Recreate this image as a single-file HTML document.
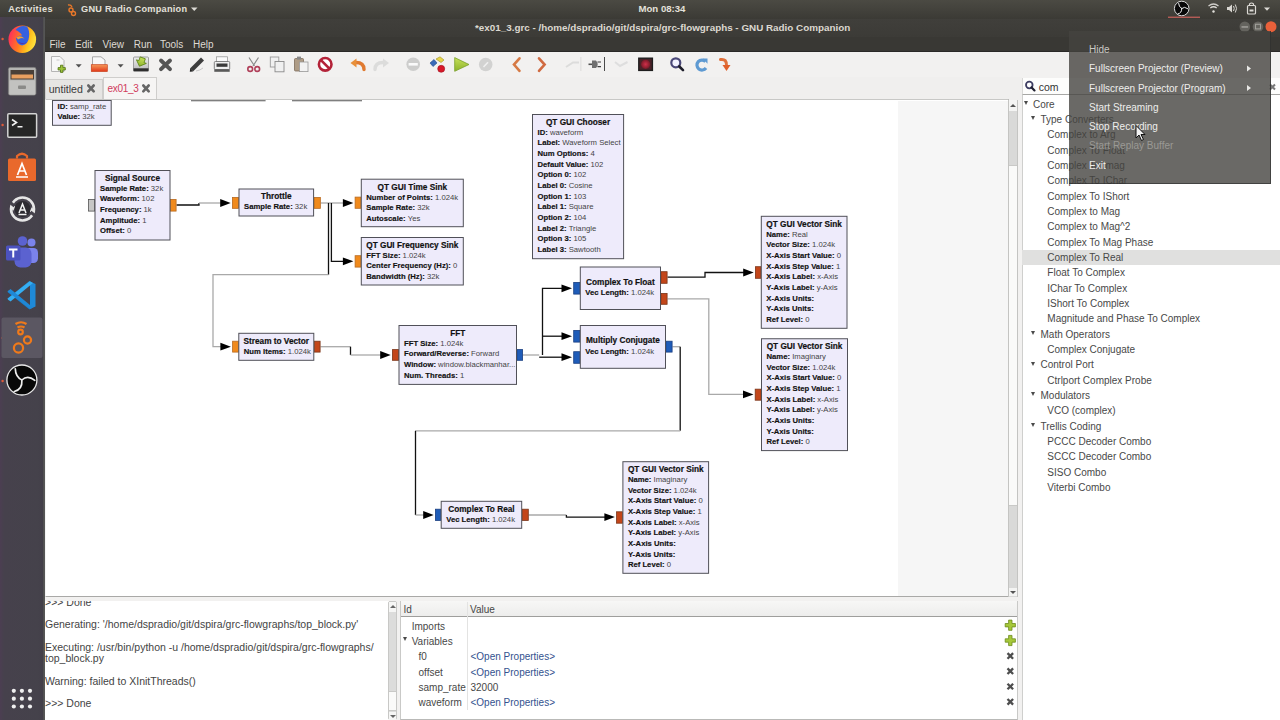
<!DOCTYPE html>
<html><head><meta charset="utf-8">
<style>
*{box-sizing:border-box}
html,body{margin:0;padding:0}
body{width:1280px;height:720px;position:relative;overflow:hidden;background:#f2f1f0;font-family:"Liberation Sans",sans-serif;}
.a{position:absolute}
.t{position:absolute;white-space:nowrap;line-height:1}
.bt{font-family:"Liberation Sans",sans-serif;font-size:8.25px;font-weight:700;fill:#111;stroke:#111;stroke-width:0.18}
.br{font-family:"Liberation Sans",sans-serif;font-size:7.7px;fill:#444}
.bk{font-weight:bold;fill:#111;stroke:#111;stroke-width:0.15}
#topbar{left:0;top:0;width:1280px;height:19px;background:linear-gradient(#4b4a43,#3b3a35)}
#titlebar{left:45px;top:19px;width:1235px;height:18px;background:linear-gradient(#403f3b,#3c3b37)}
#menubar{left:45px;top:37px;width:1235px;height:15px;background:#393834;border-bottom:1px solid #2a2927}
#dock{left:0;top:17px;width:45px;height:703px;background:linear-gradient(to right,#4c3e52 0px,#46414c 4px,#45424b 38px,#433f49 42.5px,#505050 43.5px,#585858 45px)}
#toolbar{left:45px;top:52px;width:1235px;height:26px;background:#f2f1f0}
#tabs{left:45px;top:77px;width:977px;height:23px;background:#f0efee}
#canvas{left:45px;top:99px;width:964px;height:498px;background:#ffffff;border:1px solid #a9a9a7;border-left-color:#f4f4f4;border-top-color:#c8c8c6}
#cgrey{left:898px;top:101px;width:110px;height:495px;background:#f6f6f6}
#vscroll{left:1008px;top:100px;width:10px;height:497px;background:#d9d9d8;border-left:1px solid #c4c4c2;border-right:1px solid #c4c4c2}
#tree{left:1022px;top:95px;width:258px;height:625px;background:#ffffff;border-left:1px solid #cfcfcd}
#search{left:1022px;top:78px;width:258px;height:17px;background:#fdfdfc;border-bottom:1px solid #a7a7a5;border-left:1px solid #d8d8d6}
.tb{color:#e4e1da;font-size:10px;font-weight:bold}
.mn{color:#dedad3;font-size:10px}
.tr{position:absolute;white-space:nowrap;line-height:1;font-size:10px;color:#484848}
.tri{position:absolute;width:0;height:0;border-left:3px solid transparent;border-right:3px solid transparent;border-top:5px solid #4a4a4a}
#console{left:45px;top:601px;width:344px;height:119px;background:#ffffff}
.cs{position:absolute;white-space:nowrap;line-height:1;font-size:10.5px;color:#444;left:45px}
#cscroll{left:388px;top:601px;width:9px;height:119px;background:#dcdcdb;border:1px solid #c8c8c6;border-radius:2px}
#vars{left:400px;top:601px;width:618px;height:119px;background:#ffffff;border-left:1px solid #c9c9c7;border-right:1px solid #c9c9c7;border-bottom:1px solid #b9b9b7}
#vhead{left:401px;top:601px;width:616px;height:16px;background:linear-gradient(#f7f7f6,#ededec);border-bottom:1px solid #9e9e9c}
.vt{position:absolute;white-space:nowrap;line-height:1;font-size:10px;color:#474747}
.lk{color:#33528e}
#obs{left:1069px;top:31px;width:202px;height:153px;background:rgba(69,68,64,0.8);border-right:1px solid rgba(40,40,40,0.6);border-bottom:1px solid rgba(40,40,40,0.6)}
.om{position:absolute;white-space:nowrap;line-height:1;font-size:10px;color:#eeeeec;left:20px}
</style></head>
<body>
<div id="topbar" class="a"></div>
<div class="t tb" style="left:8.2px;top:5.4px;font-size:9.2px;letter-spacing:0.4px">Activities</div>
<div class="t tb" style="left:81px;top:5px;font-size:9.2px;letter-spacing:0.25px">GNU Radio Companion</div>
<div class="t tb" style="left:638.5px;top:4px;font-size:9.6px">Mon 08:34</div>
<div id="titlebar" class="a"></div>
<div class="t tb" style="left:475px;top:23px;font-size:9.85px;color:#dcd8d0">*ex01_3.grc - /home/dspradio/git/dspira/grc-flowgraphs - GNU Radio Companion</div>
<div id="menubar" class="a"></div>
<div class="t mn" style="left:49.4px;top:40px">File</div>
<div class="t mn" style="left:75px;top:40px">Edit</div>
<div class="t mn" style="left:102.5px;top:40px">View</div>
<div class="t mn" style="left:133.7px;top:40px">Run</div>
<div class="t mn" style="left:160px;top:40px">Tools</div>
<div class="t mn" style="left:193px;top:40px">Help</div>
<div id="toolbar" class="a"></div>
<div id="tabs" class="a"></div>
<div class="a" style="left:45px;top:79px;width:58px;height:21px;background:#e6e5e3;border:1px solid #cfcecc;border-bottom:none"></div>
<div class="a" style="left:103px;top:77px;width:54px;height:23px;background:#f6f5f4;border:1px solid #cfcecc;border-bottom:none"></div>
<div class="tr" style="left:48.7px;top:83.6px;color:#3a3a3a;font-size:10.6px">untitled</div>
<div class="tr" style="left:107.5px;top:83.8px;color:#d03a5c;font-size:10px;letter-spacing:-0.3px">ex01_3</div>
<div id="canvas" class="a"></div>
<div id="cgrey" class="a"></div>
<div id="vscroll" class="a"></div>
<div class="a" style="left:1009px;top:165px;width:8px;height:341px;background:#fafaf9;border-top:1px solid #c9c9c7;border-bottom:1px solid #c9c9c7"></div>
<div class="a" style="left:1009px;top:100px;width:8px;height:11px;background:#f4f4f3"></div>
<div class="a" style="left:1009px;top:588px;width:8px;height:8px;background:#f4f4f3"></div>
<div class="tri" style="left:1010px;top:104px;border-top:none;border-bottom:3px solid #555"></div>
<div class="tri" style="left:1010px;top:591px;border-top:3px solid #555"></div>
<div id="search" class="a"></div>
<div class="tr" style="left:1038.7px;top:82px;font-size:10.5px;color:#333">com</div>
<div id="tree" class="a"></div>
<div class="a" style="left:1022px;top:249.5px;width:258px;height:15px;background:#e0e0df"></div>
<div class="tr" style="left:1033px;top:99.7px">Core</div>
<div class="tri" style="left:1023.7px;top:100.9px;border-left-width:2.5px;border-right-width:2.5px;border-top-width:4.5px"></div>
<div class="tr" style="left:1040.5px;top:115.03px">Type Converters</div>
<div class="tri" style="left:1031.2px;top:116.23px;border-left-width:2.5px;border-right-width:2.5px;border-top-width:4.5px"></div>
<div class="tr" style="left:1047.3px;top:130.36px">Complex to Arg</div>
<div class="tr" style="left:1047.3px;top:145.69px">Complex To Float</div>
<div class="tr" style="left:1047.3px;top:161.02px">Complex To Imag</div>
<div class="tr" style="left:1047.3px;top:176.35px">Complex To IChar</div>
<div class="tr" style="left:1047.3px;top:191.68px">Complex To IShort</div>
<div class="tr" style="left:1047.3px;top:207.01px">Complex to Mag</div>
<div class="tr" style="left:1047.3px;top:222.34px">Complex to Mag^2</div>
<div class="tr" style="left:1047.3px;top:237.67px">Complex To Mag Phase</div>
<div class="tr" style="left:1047.3px;top:253px">Complex To Real</div>
<div class="tr" style="left:1047.3px;top:268.33px">Float To Complex</div>
<div class="tr" style="left:1047.3px;top:283.66px">IChar To Complex</div>
<div class="tr" style="left:1047.3px;top:298.99px">IShort To Complex</div>
<div class="tr" style="left:1047.3px;top:314.32px">Magnitude and Phase To Complex</div>
<div class="tr" style="left:1040.5px;top:329.65px">Math Operators</div>
<div class="tri" style="left:1031.2px;top:330.85px;border-left-width:2.5px;border-right-width:2.5px;border-top-width:4.5px"></div>
<div class="tr" style="left:1047.3px;top:344.98px">Complex Conjugate</div>
<div class="tr" style="left:1040.5px;top:360.31px">Control Port</div>
<div class="tri" style="left:1031.2px;top:361.51px;border-left-width:2.5px;border-right-width:2.5px;border-top-width:4.5px"></div>
<div class="tr" style="left:1047.3px;top:375.64px">Ctrlport Complex Probe</div>
<div class="tr" style="left:1040.5px;top:390.97px">Modulators</div>
<div class="tri" style="left:1031.2px;top:392.17px;border-left-width:2.5px;border-right-width:2.5px;border-top-width:4.5px"></div>
<div class="tr" style="left:1047.3px;top:406.3px">VCO (complex)</div>
<div class="tr" style="left:1040.5px;top:421.63px">Trellis Coding</div>
<div class="tri" style="left:1031.2px;top:422.83px;border-left-width:2.5px;border-right-width:2.5px;border-top-width:4.5px"></div>
<div class="tr" style="left:1047.3px;top:436.96px">PCCC Decoder Combo</div>
<div class="tr" style="left:1047.3px;top:452.29px">SCCC Decoder Combo</div>
<div class="tr" style="left:1047.3px;top:467.62px">SISO Combo</div>
<div class="tr" style="left:1047.3px;top:482.95px">Viterbi Combo</div>
<div id="console" class="a"></div>
<div class="cs" style="top:596.5px">&gt;&gt;&gt; Done</div>
<div class="cs" style="top:618.5px">Generating: '/home/dspradio/git/dspira/grc-flowgraphs/top_block.py'</div>
<div class="cs" style="top:641.5px">Executing: /usr/bin/python -u /home/dspradio/git/dspira/grc-flowgraphs/</div>
<div class="cs" style="top:652.5px">top_block.py</div>
<div class="cs" style="top:676px">Warning: failed to XInitThreads()</div>
<div class="cs" style="top:698px">&gt;&gt;&gt; Done</div>
<div class="a" style="left:45px;top:597px;width:344px;height:4px;background:#f2f1f0"></div>
<div id="cscroll" class="a"></div>
<div class="a" style="left:389px;top:602px;width:7px;height:10px;background:#f6f6f5"></div>
<div class="a" style="left:389px;top:691px;width:7px;height:20px;background:#fafaf9;border-top:1px solid #c9c9c7;border-bottom:1px solid #c9c9c7"></div>
<div class="a" style="left:389px;top:712px;width:7px;height:8px;background:#f6f6f5"></div>
<div class="tri" style="left:389.5px;top:605px;border-top:none;border-bottom:3px solid #666"></div>
<div class="tri" style="left:389.5px;top:715px;border-top:3px solid #666"></div>
<div id="vars" class="a"></div>
<div id="vhead" class="a"></div>
<div class="a" style="left:467px;top:602px;width:1px;height:108px;background:#e3e3e2"></div>
<div class="vt" style="left:403.5px;top:604.5px">Id</div>
<div class="vt" style="left:470px;top:604.5px">Value</div>
<div class="vt" style="left:411.7px;top:621.7px">Imports</div>
<div class="vt" style="left:411.7px;top:637px">Variables</div>
<div class="vt" style="left:418.5px;top:652.3px">f0</div>
<div class="vt" style="left:470.5px;top:652.3px"><span class="lk">&lt;Open Properties&gt;</span></div>
<div class="vt" style="left:418.5px;top:667.6px">offset</div>
<div class="vt" style="left:470.5px;top:667.6px"><span class="lk">&lt;Open Properties&gt;</span></div>
<div class="vt" style="left:418.5px;top:682.9px">samp_rate</div>
<div class="vt" style="left:470.5px;top:682.9px">32000</div>
<div class="vt" style="left:418.5px;top:698.2px">waveform</div>
<div class="vt" style="left:470.5px;top:698.2px"><span class="lk">&lt;Open Properties&gt;</span></div>
<div class="tri" style="left:402.5px;top:637px;border-left-width:2.5px;border-right-width:2.5px;border-top-width:4.5px"></div>
<svg class="a" style="left:1000px;top:615px" width="20" height="100" viewBox="1000 615 20 100">
<path d="M1008.6 620.1 h3.4 v3.4 h3.4 v3.4 h-3.4 v3.4 h-3.4 v-3.4 h-3.4 v-3.4 h3.4 z" fill="#a6c83a" stroke="#6c8a1c" stroke-width="0.8"/>
<path d="M1008.6 635.4 h3.4 v3.4 h3.4 v3.4 h-3.4 v3.4 h-3.4 v-3.4 h-3.4 v-3.4 h3.4 z" fill="#a6c83a" stroke="#6c8a1c" stroke-width="0.8"/>
<path d="M1007.5 653.1 L1013.1 658.7 M1013.1 653.1 L1007.5 658.7" stroke="#4e4e4e" stroke-width="2.3"/>
<path d="M1007.5 668.4 L1013.1 674 M1013.1 668.4 L1007.5 674" stroke="#4e4e4e" stroke-width="2.3"/>
<path d="M1007.5 683.7 L1013.1 689.3 M1013.1 683.7 L1007.5 689.3" stroke="#4e4e4e" stroke-width="2.3"/>
<path d="M1007.5 699 L1013.1 704.6 M1013.1 699 L1007.5 704.6" stroke="#4e4e4e" stroke-width="2.3"/>
</svg>
<svg class="a" style="left:0;top:0" width="1280" height="720" viewBox="0 0 1280 720">
<defs><clipPath id="cv"><rect x="46" y="100" width="961" height="496"/></clipPath></defs>
<g clip-path="url(#cv)">
<path d="M191 100.8 H265.6 M292 100.8 H362" stroke="#555" stroke-width="1.1"/>
<path d="M176.5 205 L199 205 L199 203" fill="none" stroke="#111111" stroke-width="1.3"/>
<path d="M199 203 L221 203" fill="none" stroke="#a9a9a9" stroke-width="1.3"/>
<path d="M320.75 203 L344 203" fill="none" stroke="#a9a9a9" stroke-width="1.3"/>
<path d="M331.4 203 L331.4 261.3 L344 261.3" fill="none" stroke="#111111" stroke-width="1.3"/>
<path d="M328.5 203 L328.5 274.7" fill="none" stroke="#111111" stroke-width="1.3"/>
<path d="M328.5 274.7 L213 274.7 L213 346.7 L221 346.7" fill="none" stroke="#a9a9a9" stroke-width="1.3"/>
<path d="M320.5 346.7 L350.5 346.7" fill="none" stroke="#a9a9a9" stroke-width="1.3"/>
<path d="M350.5 346.7 L350.5 355" fill="none" stroke="#111111" stroke-width="1.3"/>
<path d="M350.5 355 L381 355" fill="none" stroke="#a9a9a9" stroke-width="1.3"/>
<path d="M523 355 L539.2 355" fill="none" stroke="#a9a9a9" stroke-width="1.3"/>
<path d="M542.5 355 L542.5 288.3 L562 288.3" fill="none" stroke="#111111" stroke-width="1.3"/>
<path d="M542.5 336.2 L562 336.2" fill="none" stroke="#111111" stroke-width="1.3"/>
<path d="M539.2 357.2 L562 357.2" fill="none" stroke="#111111" stroke-width="1.3"/>
<path d="M667.5 277.2 L705 277.2 L705 272.5 L744 272.5" fill="none" stroke="#111111" stroke-width="1.3"/>
<path d="M667.5 298.8 L708.8 298.8 L708.8 394.4 L744 394.4" fill="none" stroke="#a9a9a9" stroke-width="1.3"/>
<path d="M672.5 346.7 L680.2 346.7" fill="none" stroke="#a9a9a9" stroke-width="1.3"/>
<path d="M680.2 346.7 L680.2 430.8" fill="none" stroke="#111111" stroke-width="1.3"/>
<path d="M680.2 430.8 L415.5 430.8" fill="none" stroke="#a9a9a9" stroke-width="1.3"/>
<path d="M415.5 430.8 L415.5 515" fill="none" stroke="#111111" stroke-width="1.3"/>
<path d="M415.5 515 L424 515" fill="none" stroke="#a9a9a9" stroke-width="1.3"/>
<path d="M528.7 515 L566.4 515" fill="none" stroke="#a9a9a9" stroke-width="1.3"/>
<path d="M566.4 515 L566.4 517.1 L605 517.1" fill="none" stroke="#111111" stroke-width="1.3"/>
<path d="M230.7 203 L220.2 199.1 L220.2 206.9 Z" fill="#000"/>
<path d="M353.4 203 L342.9 199.1 L342.9 206.9 Z" fill="#000"/>
<path d="M353.4 261.3 L342.9 257.4 L342.9 265.2 Z" fill="#000"/>
<path d="M230.9 346.7 L220.4 342.8 L220.4 350.6 Z" fill="#000"/>
<path d="M390.7 355 L380.2 351.1 L380.2 358.9 Z" fill="#000"/>
<path d="M572 288.3 L561.5 284.4 L561.5 292.2 Z" fill="#000"/>
<path d="M572 336.2 L561.5 332.3 L561.5 340.1 Z" fill="#000"/>
<path d="M572 357.2 L561.5 353.3 L561.5 361.1 Z" fill="#000"/>
<path d="M753.7 272.5 L743.2 268.6 L743.2 276.4 Z" fill="#000"/>
<path d="M753.5 394.4 L743 390.5 L743 398.3 Z" fill="#000"/>
<path d="M433.7 515 L423.2 511.1 L423.2 518.9 Z" fill="#000"/>
<path d="M614.9 517.1 L604.4 513.2 L604.4 521 Z" fill="#000"/>
<rect x="88.4" y="199.4" width="6.2" height="11.7" fill="#c6c6c6" stroke="#555" stroke-width="0.8"/>
<rect x="170.4" y="199.4" width="5.7" height="11.7" fill="#f08a1c" stroke="#b86a20" stroke-width="0.8"/>
<rect x="232.4" y="197.4" width="6.2" height="10.95" fill="#f08a1c" stroke="#b86a20" stroke-width="0.8"/>
<rect x="314" y="197.4" width="6.35" height="10.95" fill="#f08a1c" stroke="#b86a20" stroke-width="0.8"/>
<rect x="355.1" y="197.1" width="5.8" height="11.2" fill="#f08a1c" stroke="#b86a20" stroke-width="0.8"/>
<rect x="355.1" y="255.7" width="5.8" height="11.4" fill="#f08a1c" stroke="#b86a20" stroke-width="0.8"/>
<rect x="232.6" y="341.2" width="5.8" height="10.9" fill="#f08a1c" stroke="#b86a20" stroke-width="0.8"/>
<rect x="314.2" y="341.2" width="5.9" height="10.9" fill="#c3461a" stroke="#7a3418" stroke-width="0.8"/>
<rect x="392.4" y="349.6" width="6.2" height="10.7" fill="#c3461a" stroke="#7a3418" stroke-width="0.8"/>
<rect x="516.9" y="349.6" width="5.7" height="10.7" fill="#1f5cb8" stroke="#1a3f80" stroke-width="0.8"/>
<rect x="573.7" y="282.4" width="6.2" height="11.7" fill="#1f5cb8" stroke="#1a3f80" stroke-width="0.8"/>
<rect x="660.9" y="271.7" width="6.2" height="11.6" fill="#c3461a" stroke="#7a3418" stroke-width="0.8"/>
<rect x="660.9" y="293.4" width="6.2" height="10.9" fill="#c3461a" stroke="#7a3418" stroke-width="0.8"/>
<rect x="573.7" y="330.4" width="6.2" height="11.7" fill="#1f5cb8" stroke="#1a3f80" stroke-width="0.8"/>
<rect x="573.7" y="351.7" width="6.2" height="11.6" fill="#1f5cb8" stroke="#1a3f80" stroke-width="0.8"/>
<rect x="665.9" y="341.2" width="6.2" height="10.9" fill="#1f5cb8" stroke="#1a3f80" stroke-width="0.8"/>
<rect x="755.4" y="266.7" width="5.5" height="11.6" fill="#c3461a" stroke="#7a3418" stroke-width="0.8"/>
<rect x="755.2" y="389.15" width="5.9" height="11.05" fill="#c3461a" stroke="#7a3418" stroke-width="0.8"/>
<rect x="435.4" y="509.2" width="5.4" height="11.2" fill="#1f5cb8" stroke="#1a3f80" stroke-width="0.8"/>
<rect x="522.1" y="509.2" width="6.2" height="11.2" fill="#c3461a" stroke="#7a3418" stroke-width="0.8"/>
<rect x="616.6" y="511.8" width="5.9" height="11.4" fill="#c3461a" stroke="#7a3418" stroke-width="0.8"/>
<rect x="52.5" y="100.5" width="58.7" height="24.8" fill="#eeebfb" stroke="#505058" stroke-width="1"/>
<text x="81.85" y="-50" text-anchor="middle" class="bt"></text>
<text x="57.5" y="108.8" class="br"><tspan class="bk">ID: </tspan>samp_rate</text>
<text x="57.5" y="119.45" class="br"><tspan class="bk">Value: </tspan>32k</text>
<rect x="95" y="170.5" width="75" height="69.5" fill="#eeebfb" stroke="#505058" stroke-width="1"/>
<text x="132.5" y="180.9" text-anchor="middle" class="bt">Signal Source</text>
<text x="100" y="190.8" class="br"><tspan class="bk">Sample Rate: </tspan>32k</text>
<text x="100" y="201.45" class="br"><tspan class="bk">Waveform: </tspan>102</text>
<text x="100" y="212.1" class="br"><tspan class="bk">Frequency: </tspan>1k</text>
<text x="100" y="222.75" class="br"><tspan class="bk">Amplitude: </tspan>1</text>
<text x="100" y="233.4" class="br"><tspan class="bk">Offset: </tspan>0</text>
<rect x="239" y="189" width="74.6" height="27" fill="#eeebfb" stroke="#505058" stroke-width="1"/>
<text x="276.3" y="199.4" text-anchor="middle" class="bt">Throttle</text>
<text x="244" y="209.3" class="br"><tspan class="bk">Sample Rate: </tspan>32k</text>
<rect x="361.3" y="179.2" width="102" height="47.5" fill="#eeebfb" stroke="#505058" stroke-width="1"/>
<text x="412.3" y="189.6" text-anchor="middle" class="bt">QT GUI Time Sink</text>
<text x="366.3" y="199.5" class="br"><tspan class="bk">Number of Points: </tspan>1.024k</text>
<text x="366.3" y="210.15" class="br"><tspan class="bk">Sample Rate: </tspan>32k</text>
<text x="366.3" y="220.8" class="br"><tspan class="bk">Autoscale: </tspan>Yes</text>
<rect x="361.3" y="237.5" width="102" height="47.5" fill="#eeebfb" stroke="#505058" stroke-width="1"/>
<text x="412.3" y="247.9" text-anchor="middle" class="bt">QT GUI Frequency Sink</text>
<text x="366.3" y="257.8" class="br"><tspan class="bk">FFT Size: </tspan>1.024k</text>
<text x="366.3" y="268.45" class="br"><tspan class="bk">Center Frequency (Hz): </tspan>0</text>
<text x="366.3" y="279.1" class="br"><tspan class="bk">Bandwidth (Hz): </tspan>32k</text>
<rect x="238.8" y="333.3" width="75" height="27" fill="#eeebfb" stroke="#505058" stroke-width="1"/>
<text x="276.3" y="343.7" text-anchor="middle" class="bt">Stream to Vector</text>
<text x="243.8" y="353.6" class="br"><tspan class="bk">Num Items: </tspan>1.024k</text>
<rect x="399" y="325.5" width="117.5" height="58.9" fill="#eeebfb" stroke="#505058" stroke-width="1"/>
<text x="457.75" y="335.9" text-anchor="middle" class="bt">FFT</text>
<text x="404" y="345.8" class="br"><tspan class="bk">FFT Size: </tspan>1.024k</text>
<text x="404" y="356.45" class="br"><tspan class="bk">Forward/Reverse: </tspan>Forward</text>
<text x="404" y="367.1" class="br"><tspan class="bk">Window: </tspan>window.blackmanhar...</text>
<text x="404" y="377.75" class="br"><tspan class="bk">Num. Threads: </tspan>1</text>
<rect x="532.5" y="114.5" width="91.1" height="144.2" fill="#eeebfb" stroke="#505058" stroke-width="1"/>
<text x="578.05" y="124.9" text-anchor="middle" class="bt">QT GUI Chooser</text>
<text x="537.5" y="134.8" class="br"><tspan class="bk">ID: </tspan>waveform</text>
<text x="537.5" y="145.45" class="br"><tspan class="bk">Label: </tspan>Waveform Select</text>
<text x="537.5" y="156.1" class="br"><tspan class="bk">Num Options: </tspan>4</text>
<text x="537.5" y="166.75" class="br"><tspan class="bk">Default Value: </tspan>102</text>
<text x="537.5" y="177.4" class="br"><tspan class="bk">Option 0: </tspan>102</text>
<text x="537.5" y="188.05" class="br"><tspan class="bk">Label 0: </tspan>Cosine</text>
<text x="537.5" y="198.7" class="br"><tspan class="bk">Option 1: </tspan>103</text>
<text x="537.5" y="209.35" class="br"><tspan class="bk">Label 1: </tspan>Square</text>
<text x="537.5" y="220" class="br"><tspan class="bk">Option 2: </tspan>104</text>
<text x="537.5" y="230.65" class="br"><tspan class="bk">Label 2: </tspan>Triangle</text>
<text x="537.5" y="241.3" class="br"><tspan class="bk">Option 3: </tspan>105</text>
<text x="537.5" y="251.95" class="br"><tspan class="bk">Label 3: </tspan>Sawtooth</text>
<rect x="580.3" y="267" width="80.2" height="42.5" fill="#eeebfb" stroke="#505058" stroke-width="1"/>
<text x="620.4" y="284.625" text-anchor="middle" class="bt">Complex To Float</text>
<text x="585.3" y="295.025" class="br"><tspan class="bk">Vec Length: </tspan>1.024k</text>
<rect x="580.3" y="325.5" width="85.2" height="42.8" fill="#eeebfb" stroke="#505058" stroke-width="1"/>
<text x="622.9" y="343.275" text-anchor="middle" class="bt">Multiply Conjugate</text>
<text x="585.3" y="353.675" class="br"><tspan class="bk">Vec Length: </tspan>1.024k</text>
<rect x="761.3" y="216.3" width="85.7" height="112" fill="#eeebfb" stroke="#505058" stroke-width="1"/>
<text x="804.15" y="226.7" text-anchor="middle" class="bt">QT GUI Vector Sink</text>
<text x="766.3" y="236.6" class="br"><tspan class="bk">Name: </tspan>Real</text>
<text x="766.3" y="247.25" class="br"><tspan class="bk">Vector Size: </tspan>1.024k</text>
<text x="766.3" y="257.9" class="br"><tspan class="bk">X-Axis Start Value: </tspan>0</text>
<text x="766.3" y="268.55" class="br"><tspan class="bk">X-Axis Step Value: </tspan>1</text>
<text x="766.3" y="279.2" class="br"><tspan class="bk">X-Axis Label: </tspan>x-Axis</text>
<text x="766.3" y="289.85" class="br"><tspan class="bk">Y-Axis Label: </tspan>y-Axis</text>
<text x="766.3" y="300.5" class="br"><tspan class="bk">X-Axis Units: </tspan></text>
<text x="766.3" y="311.15" class="br"><tspan class="bk">Y-Axis Units: </tspan></text>
<text x="766.3" y="321.8" class="br"><tspan class="bk">Ref Level: </tspan>0</text>
<rect x="761.5" y="338.75" width="86" height="111.85" fill="#eeebfb" stroke="#505058" stroke-width="1"/>
<text x="804.5" y="349.15" text-anchor="middle" class="bt">QT GUI Vector Sink</text>
<text x="766.5" y="359.05" class="br"><tspan class="bk">Name: </tspan>Imaginary</text>
<text x="766.5" y="369.7" class="br"><tspan class="bk">Vector Size: </tspan>1.024k</text>
<text x="766.5" y="380.35" class="br"><tspan class="bk">X-Axis Start Value: </tspan>0</text>
<text x="766.5" y="391" class="br"><tspan class="bk">X-Axis Step Value: </tspan>1</text>
<text x="766.5" y="401.65" class="br"><tspan class="bk">X-Axis Label: </tspan>x-Axis</text>
<text x="766.5" y="412.3" class="br"><tspan class="bk">Y-Axis Label: </tspan>y-Axis</text>
<text x="766.5" y="422.95" class="br"><tspan class="bk">X-Axis Units: </tspan></text>
<text x="766.5" y="433.6" class="br"><tspan class="bk">Y-Axis Units: </tspan></text>
<text x="766.5" y="444.25" class="br"><tspan class="bk">Ref Level: </tspan>0</text>
<rect x="441.2" y="501.3" width="80.5" height="27" fill="#eeebfb" stroke="#505058" stroke-width="1"/>
<text x="481.45" y="511.7" text-anchor="middle" class="bt">Complex To Real</text>
<text x="446.2" y="521.6" class="br"><tspan class="bk">Vec Length: </tspan>1.024k</text>
<rect x="622.9" y="461.7" width="85.7" height="111.6" fill="#eeebfb" stroke="#505058" stroke-width="1"/>
<text x="665.75" y="472.1" text-anchor="middle" class="bt">QT GUI Vector Sink</text>
<text x="627.9" y="482" class="br"><tspan class="bk">Name: </tspan>Imaginary</text>
<text x="627.9" y="492.65" class="br"><tspan class="bk">Vector Size: </tspan>1.024k</text>
<text x="627.9" y="503.3" class="br"><tspan class="bk">X-Axis Start Value: </tspan>0</text>
<text x="627.9" y="513.95" class="br"><tspan class="bk">X-Axis Step Value: </tspan>1</text>
<text x="627.9" y="524.6" class="br"><tspan class="bk">X-Axis Label: </tspan>x-Axis</text>
<text x="627.9" y="535.25" class="br"><tspan class="bk">Y-Axis Label: </tspan>y-Axis</text>
<text x="627.9" y="545.9" class="br"><tspan class="bk">X-Axis Units: </tspan></text>
<text x="627.9" y="556.55" class="br"><tspan class="bk">Y-Axis Units: </tspan></text>
<text x="627.9" y="567.2" class="br"><tspan class="bk">Ref Level: </tspan>0</text>
</g></svg>
<div id="dock" class="a"></div>
<svg class="a" style="left:0;top:0" width="45" height="720" viewBox="0 0 45 720">
<defs>
<linearGradient id="ff1" x1="0" y1="0.3" x2="1" y2="0.6"><stop offset="0" stop-color="#ff2a5e"/><stop offset="0.45" stop-color="#ff7a20"/><stop offset="0.75" stop-color="#ffc21e"/><stop offset="1" stop-color="#ffe440"/></linearGradient>
<linearGradient id="vs1" x1="0" y1="0" x2="1" y2="1"><stop offset="0" stop-color="#35a7f0"/><stop offset="1" stop-color="#0a6ac0"/></linearGradient>
</defs>
<circle cx="2.6" cy="39" r="1.2" fill="#e05a3a"/>
<circle cx="2.6" cy="125" r="1.2" fill="#e05a3a"/>
<circle cx="2.6" cy="338" r="1.2" fill="#e05a3a"/>
<circle cx="2.6" cy="381" r="1.2" fill="#e05a3a"/>
<circle cx="22.3" cy="39.3" r="13.8" fill="url(#ff1)"/>
<path d="M15.5 30 Q20 24.5 27 26.5 Q30 31 29 37 Q28.5 44 22 45.5 Q16.5 44 16 38.5 Q18 35 22 35.5 Q20.5 32 15.5 30 Z" fill="#3560e0"/>
<path d="M16.5 37.5 Q20 34.5 24.5 38.5 Q21 37 18 39.5 Z" fill="#f0a030"/>
<path d="M18 42 Q23 46 28 41.5 Q24 44.5 18 42 Z" fill="#5a2aa0"/>
<rect x="8.3" y="67.3" width="27.8" height="28" rx="2" fill="#b4b4b2" stroke="#6a6a6a" stroke-width="0.6"/>
<rect x="10.5" y="70" width="23.5" height="9.5" fill="#4a4038"/><rect x="11.5" y="74.5" width="21.5" height="4" fill="#e9a060"/>
<rect x="9.5" y="80.5" width="25.5" height="14" fill="#c2c2c0"/><rect x="18" y="85.5" width="8" height="3.6" rx="1" fill="#8a8a88"/>
<rect x="7.8" y="113.8" width="28.8" height="23.4" rx="1" fill="#262626" stroke="#d4d4d4" stroke-width="1.5"/>
<path d="M12 119.5 L16.5 122.5 L12 125.5" stroke="#f0f0f0" stroke-width="1.6" fill="none"/><rect x="17.5" y="126" width="5" height="1.5" fill="#f0f0f0"/>
<rect x="8" y="158.5" width="28" height="22.5" rx="1.5" fill="#e9692c"/>
<path d="M17 158.5 V156 Q22 151.5 27 156 V158.5" stroke="#e9692c" stroke-width="2.2" fill="none"/>
<path d="M17.5 175 L22 163.5 L26.5 175 M19.2 171 H24.8 M16 177 H28" stroke="#fff" stroke-width="1.7" fill="none"/>
<circle cx="22.5" cy="209" r="11.5" fill="none" stroke="#e6e6e6" stroke-width="2.6"/>
<path d="M10 206 L13 211 L16 206 Z M35 212 L32 207 L29 212 Z" fill="#e6e6e6"/>
<path d="M9.5 202 L14.5 206 M35.5 216 L30.5 212" stroke="#45424b" stroke-width="3"/>
<circle cx="22.5" cy="209" r="8" fill="#2c2a30"/>
<path d="M19 213 L22.5 204 L26 213 M20.2 210 H24.8 M18.5 214.5 H26.5" stroke="#f2f2f2" stroke-width="1.5" fill="none"/>
<circle cx="31.5" cy="242.5" r="4" fill="#7b83eb"/><rect x="25" y="248" width="13" height="15" rx="4.5" fill="#7b83eb"/>
<circle cx="22.5" cy="241" r="4.8" fill="#5b62d0"/><rect x="14.5" y="247.5" width="17" height="20" rx="6" fill="#5b62d0"/>
<rect x="6" y="245.5" width="14.5" height="15" rx="1.5" fill="#4c52bf"/>
<path d="M9 249.5 H17.5 M13.25 249.5 V257.5" stroke="#fff" stroke-width="2"/>
<path d="M30 281.5 L35.5 284 V306.5 L30 309 Z" fill="#1f8ad8"/>
<path d="M31.5 282.5 L9 300.5 L7.5 298.5 L29.5 281 Z" fill="#2ba4ec"/>
<path d="M31.5 308 L9 290 L7.5 292 L29.5 309.5 Z" fill="#1a7cc8"/>
<path d="M30 281.5 L33 283 L10.5 301.5 L7.5 299 Z" fill="#35aef2"/>
<path d="M30 309 L33 307.5 L10.5 289 L7.5 291.5 Z" fill="#1f88d6"/>
<rect x="1.5" y="317.5" width="41" height="40.5" rx="2" fill="#5b5762"/>
<g stroke="#f07a1a" fill="none" stroke-width="2.2"><path d="M15.5 324 Q21 320.5 26.5 324"/><path d="M17.5 327.5 Q21 325.5 24.5 327.5"/><circle cx="20.5" cy="332" r="2.3"/><circle cx="27.5" cy="340" r="3.6"/><circle cx="18.5" cy="348" r="4.6"/></g>
<circle cx="21.9" cy="380" r="15" fill="#080808" stroke="#e8e8e8" stroke-width="1.3"/>
<path d="M21.9 380 Q15.5 377 15.3 368.8 M21.9 380 Q27.5 374.5 34.8 380.3 M21.9 380 Q22.5 389.5 14.3 391.5" stroke="#efefef" stroke-width="1.7" fill="none" stroke-linecap="round"/>
<circle cx="13.8" cy="690.8" r="2.1" fill="#f0f0f0"/>
<circle cx="13.8" cy="698.65" r="2.1" fill="#f0f0f0"/>
<circle cx="13.8" cy="706.5" r="2.1" fill="#f0f0f0"/>
<circle cx="21.9" cy="690.8" r="2.1" fill="#f0f0f0"/>
<circle cx="21.9" cy="698.65" r="2.1" fill="#f0f0f0"/>
<circle cx="21.9" cy="706.5" r="2.1" fill="#f0f0f0"/>
<circle cx="30" cy="690.8" r="2.1" fill="#f0f0f0"/>
<circle cx="30" cy="698.65" r="2.1" fill="#f0f0f0"/>
<circle cx="30" cy="706.5" r="2.1" fill="#f0f0f0"/>
</svg>
<svg class="a" style="left:0;top:0" width="1280" height="100" viewBox="0 0 1280 100">
<defs>
<linearGradient id="gOr" x1="0" y1="0" x2="0" y2="1"><stop offset="0" stop-color="#f59a5a"/><stop offset="1" stop-color="#e2381a"/></linearGradient>
<linearGradient id="gSv" x1="0" y1="0" x2="0" y2="1"><stop offset="0" stop-color="#eeeeee"/><stop offset="1" stop-color="#b8b8b8"/></linearGradient>
<linearGradient id="gGr" x1="0" y1="0" x2="0" y2="1"><stop offset="0" stop-color="#c6e05a"/><stop offset="1" stop-color="#8db22a"/></linearGradient>
<radialGradient id="gRec" cx="0.5" cy="0.5" r="0.5"><stop offset="0" stop-color="#d0304a"/><stop offset="1" stop-color="#7a1a28"/></radialGradient>
</defs>
<path d="M51.5 56.5 H60 L64 60.5 V71.5 H51.5 Z" fill="#f7f7f7" stroke="#b5b5b5" stroke-width="1"/>
<path d="M56.5 60 h3" stroke="#c8c8c8"/>
<path d="M60.5 65.2 h2.4 v2.4 h2.4 v2.4 h-2.4 v2.4 h-2.4 v-2.4 h-2.4 v-2.4 h2.4 z" fill="#9cc43a" stroke="#4f7012" stroke-width="0.8"/>
<path d="M75.7 64.2 L81.7 64.2 L78.7 67.4 Z" fill="#505050"/>
<path d="M117.6 64.2 L123.6 64.2 L120.6 67.4 Z" fill="#505050"/>
<path d="M92.5 56.8 H101 L105 60 V66 H92.5 Z" fill="#f8f8f8" stroke="#a8a8a8" stroke-width="1"/>
<rect x="91.3" y="64.7" width="16" height="6.8" fill="url(#gOr)" stroke="#c8401a" stroke-width="0.7"/>
<rect x="133.5" y="57" width="15" height="14" rx="1" fill="url(#gSv)" stroke="#8a8a8a" stroke-width="0.8"/>
<rect x="133.5" y="68.3" width="15" height="3" fill="#2e2e2e"/>
<path d="M144 57.5 V61.5 H146.5 L141 66.5 L136 61.5 H138.5 V57.5 Z" fill="url(#gGr)" stroke="#5d8418" stroke-width="0.8" transform="rotate(20 141 62)"/>
<path d="M161 60.5 L170 69.2 M170 60.5 L161 69.2" stroke="#555" stroke-width="3.9" stroke-linecap="round"/>
<path d="M191.5 70 L202.5 59" stroke="#3e3e3e" stroke-width="4.2" stroke-linecap="butt"/>
<path d="M189.8 71.8 L190.2 68.6 L193 71.4 Z" fill="#222"/>
<path d="M196 71 Q200 70.5 203 68" stroke="#c8c8c8" stroke-width="1" fill="none"/>
<rect x="216.5" y="56.8" width="11" height="6" fill="#fafafa" stroke="#999" stroke-width="0.8"/>
<rect x="214.3" y="61.5" width="15.4" height="8" rx="1" fill="#efefef" stroke="#666" stroke-width="0.8"/>
<rect x="216.5" y="63.5" width="11" height="3.3" fill="#3a3a3a"/>
<rect x="214.3" y="69.3" width="15.4" height="2.5" fill="#5a5a5a"/>
<path d="M249 57.5 L254.5 66 M258.5 57.5 L253 66" stroke="#8a8a8a" stroke-width="1.2"/>
<circle cx="250.2" cy="69" r="2.4" fill="none" stroke="#b0405a" stroke-width="1.6"/>
<circle cx="257.2" cy="69" r="2.4" fill="none" stroke="#b0405a" stroke-width="1.6"/>
<rect x="270.3" y="57" width="8.5" height="10" fill="#f0f0f0" stroke="#9a9a9a" stroke-width="0.9"/>
<rect x="275" y="61.5" width="9" height="10.3" fill="#f0f0f0" stroke="#8a8a8a" stroke-width="0.9"/>
<rect x="294.5" y="58.5" width="9" height="12.5" rx="1" fill="#ae9c86" stroke="#7d6d5a" stroke-width="0.8"/>
<rect x="297" y="56.6" width="4" height="3" fill="#888"/>
<rect x="299.5" y="62" width="8.5" height="9.6" fill="#f2f2f2" stroke="#999" stroke-width="0.8"/>
<circle cx="325.2" cy="64.3" r="6.3" fill="#fff" stroke="#b32238" stroke-width="2.6"/>
<path d="M320.7 59.8 L329.7 68.8" stroke="#b32238" stroke-width="2.6"/>
<path d="M364 69.5 Q364 62.5 356 62.5" stroke="#e07a30" stroke-width="3.4" fill="none" stroke-linecap="round"/>
<path d="M350.5 63 L356.5 58.5 L356.5 67.5 Z" fill="#e8903a"/>
<path d="M375 69.5 Q375 62.5 383 62.5" stroke="#dcdcdb" stroke-width="3.4" fill="none" stroke-linecap="round"/>
<path d="M389 63 L383 58.5 L383 67.5 Z" fill="#dcdcdb"/>
<circle cx="413.2" cy="64.3" r="6.8" fill="#cdcdcc"/>
<rect x="408.6" y="63" width="9.2" height="2.6" fill="#fafafa"/>
<path d="M430 63 L434 59.5 L437 63 L433 66.5 Z" fill="#3a6ab8" stroke="#234a8a" stroke-width="0.6"/>
<path d="M436 59 L440 56.8 L444 60 L441 62.5 Z" fill="#e6d64a" stroke="#a09020" stroke-width="0.6"/>
<circle cx="441.2" cy="68.8" r="3.5" fill="#d81828" stroke="#a01020" stroke-width="0.6"/>
<path d="M454.7 57.6 L469 64.5 L454.7 71.3 Z" fill="url(#gGr)" stroke="#79a02a" stroke-width="0.8"/>
<circle cx="485.7" cy="64.5" r="6.8" fill="#d2d2d1"/>
<path d="M483.5 67 L488 62.3" stroke="#f0f0f0" stroke-width="1.6"/>
<path d="M519.5 58.3 L514 64.6 L519.5 70.8" stroke="#d67a45" stroke-width="2.6" fill="none" stroke-linecap="round"/>
<path d="M539 58.3 L544.6 64.6 L539 70.8" stroke="#d06a40" stroke-width="2.6" fill="none" stroke-linecap="round"/>
<path d="M566 67 L573 62.5 L579 62.5" stroke="#dcdcdb" stroke-width="2" fill="none"/>
<rect x="580.5" y="57" width="0.8" height="14" fill="#d6d6d5"/>
<path d="M588.5 64.3 H592" stroke="#505050" stroke-width="1.6"/>
<path d="M592 60.5 H596 Q599.5 64.3 596 68 H592 Z" fill="#707070"/>
<path d="M597.5 62 H601 M597.5 66.6 H601" stroke="#404040" stroke-width="1.2"/>
<rect x="604" y="57" width="1" height="14" fill="#4a4a4a"/>
<path d="M615 62 L620 66 L627.5 62" stroke="#dedede" stroke-width="2" fill="none"/>
<rect x="638.8" y="58.2" width="13.6" height="12.2" fill="#4a2228" stroke="#1e1e1e" stroke-width="1.4"/>
<circle cx="645.6" cy="64.3" r="4.6" fill="url(#gRec)"/>
<circle cx="675.8" cy="62.8" r="4.5" fill="#f2f2ff" stroke="#4a4878" stroke-width="2.2"/>
<path d="M679.3 66.5 L683 70.2" stroke="#1e1e2a" stroke-width="2.6" stroke-linecap="round"/>
<path d="M705.5 61.5 A5 5 0 1 0 706 68" stroke="#5e9ad2" stroke-width="3.2" fill="none"/>
<path d="M702.5 58.6 L707.5 58.6 L707.5 63.8 Z" fill="#5e9ad2"/>
<path d="M720.5 59.5 Q727 58.5 726.5 66" stroke="#e0703a" stroke-width="3" fill="none" stroke-linecap="round"/>
<path d="M722.5 65 L730.5 65 L726.5 71 Z" fill="#e0602a"/>
<path d="M88.3 85.5 L93.7 91.3 M93.7 85.5 L88.3 91.3" stroke="#666" stroke-width="2.6" stroke-linecap="round"/>
<path d="M143.3 85.5 L148.7 91.3 M148.7 85.5 L143.3 91.3" stroke="#666" stroke-width="2.6" stroke-linecap="round"/>
<path d="M1270 84.5 L1275 89.5 M1275 84.5 L1270 89.5" stroke="#777" stroke-width="2"/>
<circle cx="1029.3" cy="85" r="3.3" fill="#fff" stroke="#3d3d62" stroke-width="1.8"/>
<path d="M1031.6 87.4 L1034.5 90.4" stroke="#202030" stroke-width="2.2" stroke-linecap="round"/>
</svg>
<svg class="a" style="left:0;top:0" width="1280" height="40" viewBox="0 0 1280 40">
<path d="M68 5 Q71 4.5 72 7" stroke="#e8782a" stroke-width="1.3" fill="none"/>
<circle cx="71" cy="10" r="2" fill="none" stroke="#e8782a" stroke-width="1.4"/>
<circle cx="73.5" cy="13.5" r="2" fill="none" stroke="#e8782a" stroke-width="1.4"/>
<path d="M191 7.5 L197.5 7.5 L194.25 11 Z" fill="#dcdad4"/>
<circle cx="1181.7" cy="8.5" r="7.3" fill="#080808" stroke="#dcdcdc" stroke-width="1"/>
<path d="M1181.7 8.5 Q1178.7 7.1 1178.6 3.5 M1181.7 8.5 Q1184.3 5.9 1187.7 8.6 M1181.7 8.5 Q1182 13 1178.1 13.9" stroke="#eeeeee" stroke-width="1" fill="none" stroke-linecap="round"/>
<rect x="1168" y="16.6" width="32" height="1.3" fill="#c0605a"/>
<path d="M1208.5 6 Q1213.5 2 1218.5 6" stroke="#cfcdc8" stroke-width="1.3" fill="none"/>
<path d="M1210.3 8 Q1213.5 5.5 1216.7 8" stroke="#dcdad5" stroke-width="1.3" fill="none"/>
<circle cx="1213.5" cy="11.5" r="1.2" fill="#e4e2dd"/>
<path d="M1227 7 H1229 L1232 4.5 V12.5 L1229 10 H1227 Z" fill="#d8d6d1"/>
<path d="M1233.5 6 Q1235 8.5 1233.5 11 M1235.3 4.5 Q1237.8 8.5 1235.3 12.5" stroke="#d8d6d1" stroke-width="1" fill="none"/>
<rect x="1247.5" y="5.5" width="8" height="8.5" rx="1" fill="none" stroke="#dcdad5" stroke-width="1.2"/>
<path d="M1249.5 5.5 V4 Q1251.5 2 1253.5 4 V5.5" stroke="#dcdad5" stroke-width="1.1" fill="none"/>
<rect x="1249.5" y="9.5" width="4" height="2" fill="#dcdad5"/>
<path d="M1264 7.5 L1270 7.5 L1267 10.8 Z" fill="#dcdad5"/>
<circle cx="1244.8" cy="26.7" r="5.3" fill="#64635e"/><rect x="1241.5" y="26.2" width="6.6" height="1.5" fill="#a09f9a"/>
<circle cx="1258" cy="26.7" r="5.3" fill="#64635e"/><rect x="1255.5" y="24.3" width="5" height="4.6" fill="none" stroke="#a09f9a" stroke-width="1.1"/>
<circle cx="1271" cy="26.7" r="5.5" fill="#e9603a"/>
</svg>
<div id="obs" class="a">
<div class="om" style="top:14px;color:#c9c8c4">Hide</div>
<div class="om" style="top:33.2px">Fullscreen Projector (Preview)</div>
<div class="om" style="top:52.6px">Fullscreen Projector (Program)</div>
<div class="om" style="top:72px">Start Streaming</div>
<div class="om" style="top:91px">Stop Recording</div>
<div class="om" style="top:110px;color:#9a9995">Start Replay Buffer</div>
<div class="om" style="top:129.6px">Exit</div>
<svg class="a" style="left:0;top:0" width="202" height="153"><path d="M178 34.5 L182 37.5 L178 40.5 Z" fill="#e8e8e6"/><path d="M178 54 L182 57 L178 60 Z" fill="#e8e8e6"/></svg>
</div>
<svg class="a" style="left:1134px;top:124px" width="14" height="20" viewBox="0 0 14 20"><path d="M2 1.5 L2 14 L5 11 L7.5 16.5 L9.5 15.5 L7 10.5 L11 10.5 Z" fill="#f2f2f2" stroke="#111" stroke-width="1"/></svg>
</body></html>
